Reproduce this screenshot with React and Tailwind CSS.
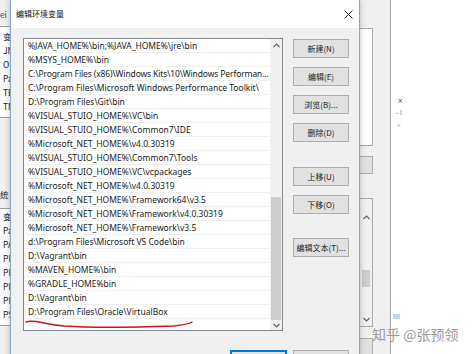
import React from "react";

const rows = [
  "%JAVA_HOME%\\bin;%JAVA_HOME%\\jre\\bin",
  "%MSYS_HOME%\\bin",
  "C:\\Program Files (x86)\\Windows Kits\\10\\Windows Performan...",
  "C:\\Program Files\\Microsoft Windows Performance Toolkit\\",
  "D:\\Program Files\\Git\\bin",
  "%VISUAL_STUIO_HOME%\\VC\\bin",
  "%VISUAL_STUIO_HOME%\\Common7\\IDE",
  "%Microsoft_NET_HOME%\\v4.0.30319",
  "%VISUAL_STUIO_HOME%\\Common7\\Tools",
  "%VISUAL_STUIO_HOME%\\VC\\vcpackages",
  "%Microsoft_NET_HOME%\\v4.0.30319",
  "%Microsoft_NET_HOME%\\Framework64\\v3.5",
  "%Microsoft_NET_HOME%\\Framework\\v4.0.30319",
  "%Microsoft_NET_HOME%\\Framework\\v3.5",
  "d:\\Program Files\\Microsoft VS Code\\bin",
  "D:\\Vagrant\\bin",
  "%MAVEN_HOME%\\bin",
  "%GRADLE_HOME%bin",
  "D:\\Vagrant\\bin",
  "D:\\Program Files\\Oracle\\VirtualBox",
  "",
];

const leftTop = ["变", "JN", "O", "Pa", "TE", "TM"];
const leftBottom = ["Pa", "PA", "PF", "PF", "PF", "PF", "PS"];

const cjk = { fontFamily: '"Noto Sans CJK SC", "Noto Sans", sans-serif' };
const latin = { fontFamily: '"Noto Sans", "Noto Sans CJK SC", sans-serif' };

const WinButton = ({ label }) => (
  <div
    className="flex h-[19px] w-[56px] shrink-0 items-center justify-center border border-[#adadad] bg-[#e1e1e1] text-[8px] text-[#1a1a1a]"
    style={cjk}
  >
    {label}
  </div>
);

const Chevron = ({ up }) => (
  <svg width="7" height="5" viewBox="0 0 7 5" className="block">
    <path
      d={up ? "M0.5 4 L3.5 1 L6.5 4" : "M0.5 1 L3.5 4 L6.5 1"}
      fill="none"
      stroke="#606060"
      strokeWidth="1.1"
    />
  </svg>
);

export default function App() {
  return (
    <div className="relative h-[354px] w-[474px] overflow-hidden bg-white">
      {/* left background window */}
      <div className="absolute left-0 top-0 h-[354px] w-[12px] bg-[#f0f0f0]" style={cjk}>
        <div className="pt-[10px] text-[8px] leading-[10px] text-[#333]">ei</div>
        <div className="mt-[6px] border-y border-[#a0a0a0] bg-white pb-[4px] pt-[2px]">
          {leftTop.map((t, i) => (
            <div key={i} className="h-[14px] pl-[3px] text-[8.5px] leading-[14px] text-[#222]">
              {t}
            </div>
          ))}
        </div>
        <div className="mt-[70px] text-[8.5px] leading-[12px] text-[#222]">统</div>
        <div className="mt-[8px] border-y border-[#a0a0a0] bg-white pb-[4px]">
          <div className="h-[14px] pl-[3px] text-[8.5px] leading-[14px]">变</div>
          {leftBottom.map((t, i) => (
            <div key={i} className="h-[14px] pl-[3px] text-[8.5px] leading-[14px] text-[#222]">
              {t}
            </div>
          ))}
        </div>
      </div>

      {/* right background window */}
      <div className="absolute left-[355px] top-0 h-[354px] w-[36px] border-r border-[#a8a8a8] bg-[#f0f0f0]">
        <div className="mt-[28px] h-[118px] w-[18px] border border-[#a8a8a8] bg-white" />
        <div className="mt-[10px] h-[18px] w-[18px] border border-[#adadad] bg-[#e1e1e1]" />
        <div className="mt-[24px] flex h-[129px] w-[18px] flex-col items-end border border-[#a8a8a8] bg-white">
          <div className="flex h-full w-[12px] flex-col items-center bg-[#f0f0f0]">
            <div className="pt-[16px]">
              <Chevron up />
            </div>
            <div className="mt-[50px] h-[17px] w-[8px] bg-[#cdcdcd]" />
            <div className="mt-auto pb-[4px]">
              <Chevron />
            </div>
          </div>
        </div>
        <div className="mt-[11px] h-[18px] w-[18px] border border-[#adadad] bg-[#e1e1e1]" />
      </div>

      {/* right desktop bits */}
      <div className="absolute left-[398px] top-[96px] text-[8px] leading-[10px] text-[#555]">×</div>
      <div className="absolute left-[396px] top-[108px] text-[7px] leading-[10px] text-[#777]">- !</div>
      <div className="absolute left-[397px] top-[120px] text-[7px] leading-[10px] text-[#777]">⌕</div>
      <div className="absolute left-[393px] top-[314px] h-[5px] w-[7px] bg-[#b9d4ee]" />

      {/* main dialog */}
      <div className="absolute left-[10px] top-[-1px] h-[400px] w-[350px] border border-[#8aa6c4] bg-[#f0f0f0] shadow-[0_0_6px_rgba(0,0,0,0.25)]">
        <div className="flex h-[28px] items-center justify-between bg-white pl-[5px] pr-[6px]">
          <span className="text-[8px] text-[#111]" style={cjk}>
            编辑环境变量
          </span>
          <svg width="9" height="9" viewBox="0 0 9 9">
            <path d="M0.5 0.5 L8.5 8.5 M8.5 0.5 L0.5 8.5" stroke="#222" strokeWidth="1" />
          </svg>
        </div>

        <div className="flex gap-[10px] pl-[12px] pt-[10px]">
          <div className="relative flex h-[293px] w-[260px] overflow-hidden border border-[#828790] bg-white">
            <div className="min-w-0 flex-1 overflow-hidden">
              {rows.map((r, i) => (
                <div
                  key={i}
                  className={`h-[14px] whitespace-nowrap border-b border-[#f0f0f0] pl-[4px] text-[8.5px] leading-[14px] text-[#1a1a1a] ${
                    i === 2 ? "tracking-[-0.12px]" : ""
                  }`}
                  style={latin}
                >
                  {r}
                </div>
              ))}
            </div>
            <div className="flex w-[12px] shrink-0 flex-col items-center bg-[#f0f0f0]">
              <div className="flex h-[12px] items-center">
                <Chevron up />
              </div>
              <div className="mt-[146px] h-[123px] w-[10px] bg-[#cdcdcd]" />
              <div className="flex flex-1 items-center">
                <Chevron />
              </div>
            </div>
            <svg
              className="pointer-events-none absolute left-0 top-0"
              width="260"
              height="293"
              viewBox="0 0 260 293"
            >
              <path
                d="M2 283 C10 280 18 285 40 287 C70 289 120 288 150 287 C160 286 165 285 168 283"
                fill="none"
                stroke="#c8141e"
                strokeWidth="1.4"
                strokeLinecap="round"
              />
            </svg>
          </div>

          <div className="flex flex-col pt-[1px]">
            <div className="flex flex-col gap-[9px]">
              <WinButton label="新建(N)" />
              <WinButton label="编辑(E)" />
              <WinButton label="浏览(B)..." />
              <WinButton label="删除(D)" />
            </div>
            <div className="mt-[25px] flex flex-col gap-[9px]">
              <WinButton label="上移(U)" />
              <WinButton label="下移(O)" />
            </div>
            <div className="mt-[24px]">
              <WinButton label="编辑文本(T)..." />
            </div>
          </div>
        </div>

        <div className="mt-[19px] flex justify-end gap-[6px] pr-[10px]">
          <div className="flex h-[19px] w-[57px] items-start justify-center border-2 border-[#0078d7] bg-[#e1e1e1] pt-[1px] text-[8px] text-[#1a1a1a]" style={cjk}>
            确定
          </div>
          <div className="flex h-[19px] w-[56px] items-start justify-center border border-[#adadad] bg-[#e1e1e1] pt-[2px] text-[8px] text-[#1a1a1a]" style={cjk}>
            取消
          </div>
        </div>
      </div>

      {/* watermark */}
      <div
        className="absolute left-[372px] top-[324px] whitespace-nowrap text-[14px] leading-[20px] text-[#9a9a9a]"
        style={{ ...cjk, textShadow: "0 0 1px rgba(255,255,255,0.8)" }}
      >
        知乎 @张预领
      </div>
    </div>
  );
}
